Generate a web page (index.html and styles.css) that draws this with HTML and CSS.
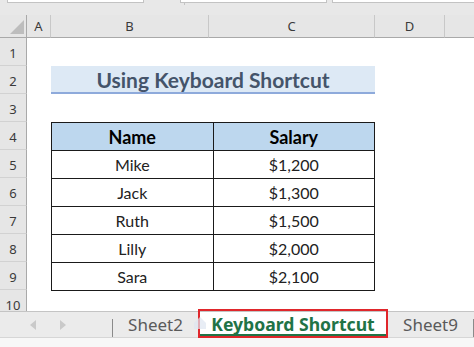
FILE: index.html
```html
<!DOCTYPE html>
<html>
<head>
    <title>Using Keyboard Shortcut</title>
    <link rel="stylesheet" href="styles.css">
</head>
<body>
    <div class="topbar">
        <div class="box box-name"></div>
        <div class="tick"></div>
        <div class="box box-mid"></div>
        <div class="box box-formula"></div>
    </div>

    <div class="sheet">
        <div class="corner">
            <svg width="14" height="14" viewBox="0 0 14 14"><polygon points="14,0 14,14 0,14" fill="#bdbdbd"/></svg>
        </div>
        <div class="colhead">A</div>
        <div class="colhead">B</div>
        <div class="colhead">C</div>
        <div class="colhead">D</div>
        <div class="colhead colhead-last"></div>

        <div class="rowhead">1</div>
        <div class="rowhead">2</div>
        <div class="rowhead">3</div>
        <div class="rowhead">4</div>
        <div class="rowhead">5</div>
        <div class="rowhead">6</div>
        <div class="rowhead">7</div>
        <div class="rowhead">8</div>
        <div class="rowhead">9</div>
        <div class="rowhead">10</div>

        <div class="title">Using Keyboard Shortcut</div>

        <table class="data">
            <tr><th>Name</th><th>Salary</th></tr>
            <tr><td>Mike</td><td>$1,200</td></tr>
            <tr><td>Jack</td><td>$1,300</td></tr>
            <tr><td>Ruth</td><td>$1,500</td></tr>
            <tr><td>Lilly</td><td>$2,000</td></tr>
            <tr><td>Sara</td><td>$2,100</td></tr>
        </table>
    </div>

    <div class="tabbar">
        <div class="nav">
            <svg width="6" height="10" viewBox="0 0 6 10"><polygon points="6,0 6,10 0,5" fill="#c9c9c9"/></svg>
            <svg width="6" height="10" viewBox="0 0 6 10"><polygon points="0,0 0,10 6,5" fill="#c9c9c9"/></svg>
        </div>
        <div class="sep"></div>
        <div class="tab">Sheet2</div>
        <div class="tab tab-active">
            <svg class="mark" width="14" height="14" viewBox="0 0 14 14"><path d="M1 7 L7 1 L13 7 L13 13 L1 13 Z" fill="#dfe6f2"/></svg>
            <span class="tab-label">Keyboard Shortcut</span>
        </div>
        <div class="tab">Sheet9</div>
        <div class="sep"></div>
    </div>
    <div class="footer"></div>
</body>
</html>
```

FILE: styles.css
```css
body {
    margin: 0;
    width: 474px;
    height: 347px;
    overflow: hidden;
    background-color: #fff;
    font-family: "Noto Sans", sans-serif;
}
.topbar {
    height: 15px;
    background-color: #e8e8e8;
    display: flex;
    align-items: flex-start;
    padding-left: 7px;
}
.box {
    height: 2px;
    background-color: #fff;
    border: 1px solid #c3c3c3;
    border-top: none;
}
.box-name {
    width: 135px;
}
.tick {
    width: 1px;
    height: 5px;
    background-color: #c3c3c3;
    margin-left: 40px;
}
.box-mid {
    width: 145px;
    margin-left: -5px;
}
.box-formula {
    flex: 1;
    margin-left: 5px;
    border-right: none;
}
.sheet {
    height: 296px;
    overflow: hidden;
    display: grid;
    grid-template-columns: 27px 24px 158px 166px 70px 1fr;
    grid-template-rows: 23px repeat(10, 28px);
}
.corner {
    background-color: #e6e6e6;
    border-right: 1px solid #a9a9a9;
    border-bottom: 1px solid #a9a9a9;
    display: flex;
    align-items: flex-end;
    justify-content: flex-end;
    padding: 0 2px 3px 0;
}
.colhead {
    background-color: #e6e6e6;
    border-right: 1px solid #c8c8c8;
    border-bottom: 1px solid #a9a9a9;
    display: flex;
    align-items: center;
    justify-content: center;
    font-size: 13px;
    color: #3a3a3a;
}
.colhead-last {
    border-right: none;
}
.rowhead {
    grid-column: 1;
    background-color: #e6e6e6;
    border-right: 1px solid #a9a9a9;
    border-bottom: 1px solid #d2d2d2;
    display: flex;
    align-items: flex-end;
    justify-content: center;
    padding-bottom: 3px;
    font-size: 13px;
    color: #3a3a3a;
}
.title {
    grid-column: 3 / 5;
    grid-row: 3;
    background-color: #dde9f5;
    border-bottom: 2px solid #8eaadb;
    display: flex;
    align-items: center;
    justify-content: center;
    font-family: Lato, sans-serif;
    font-weight: bold;
    font-size: 21px;
    color: #44546a;
}
.data {
    grid-column: 3 / 5;
    grid-row: 5 / 11;
    border-collapse: collapse;
    height: 169px;
    font-family: Lato, sans-serif;
}
.data th, .data td {
    border: 1px solid #1a1a1a;
    text-align: center;
    padding: 0;
    height: 27px;
}
.data th {
    background-color: #bdd7ee;
    font-size: 18px;
    color: #000;
    width: 50%;
}
.data th:first-child {
    width: 157px;
}
.data td {
    font-size: 16px;
    color: #222;
}
.tabbar {
    height: 25px;
    background-color: #ebebeb;
    border-top: 1px solid #c4c4c4;
    display: flex;
    align-items: stretch;
}
.nav {
    width: 112px;
    display: flex;
    align-items: center;
    gap: 24px;
    padding-left: 30px;
    box-sizing: border-box;
}
.sep {
    width: 1px;
    background-color: #8a8a8a;
    margin: 7px 0 0;
}
.tab {
    display: flex;
    align-items: center;
    justify-content: center;
    font-size: 17px;
    color: #5a5a5a;
    width: 85px;
}
.tab:last-of-type {
    width: 81px;
}
.tab-active {
    width: 190px;
    position: relative;
    flex-direction: column;
    align-items: stretch;
    background-color: #fff;
    border-bottom: 3px solid #217346;
}
.tab-label {
    flex: 1;
    border: 2px solid #e0262b;
    display: flex;
    align-items: center;
    justify-content: center;
    font-weight: bold;
    font-size: 17.6px;
    color: #217346;
    padding-top: 1px;
}
.mark {
    position: absolute;
    left: -5px;
    top: 4px;
    opacity: 0.7;
}
.footer {
    height: 10px;
    background-color: #f7f7f7;
    border-top: 1px solid #d6d6d6;
}
```
